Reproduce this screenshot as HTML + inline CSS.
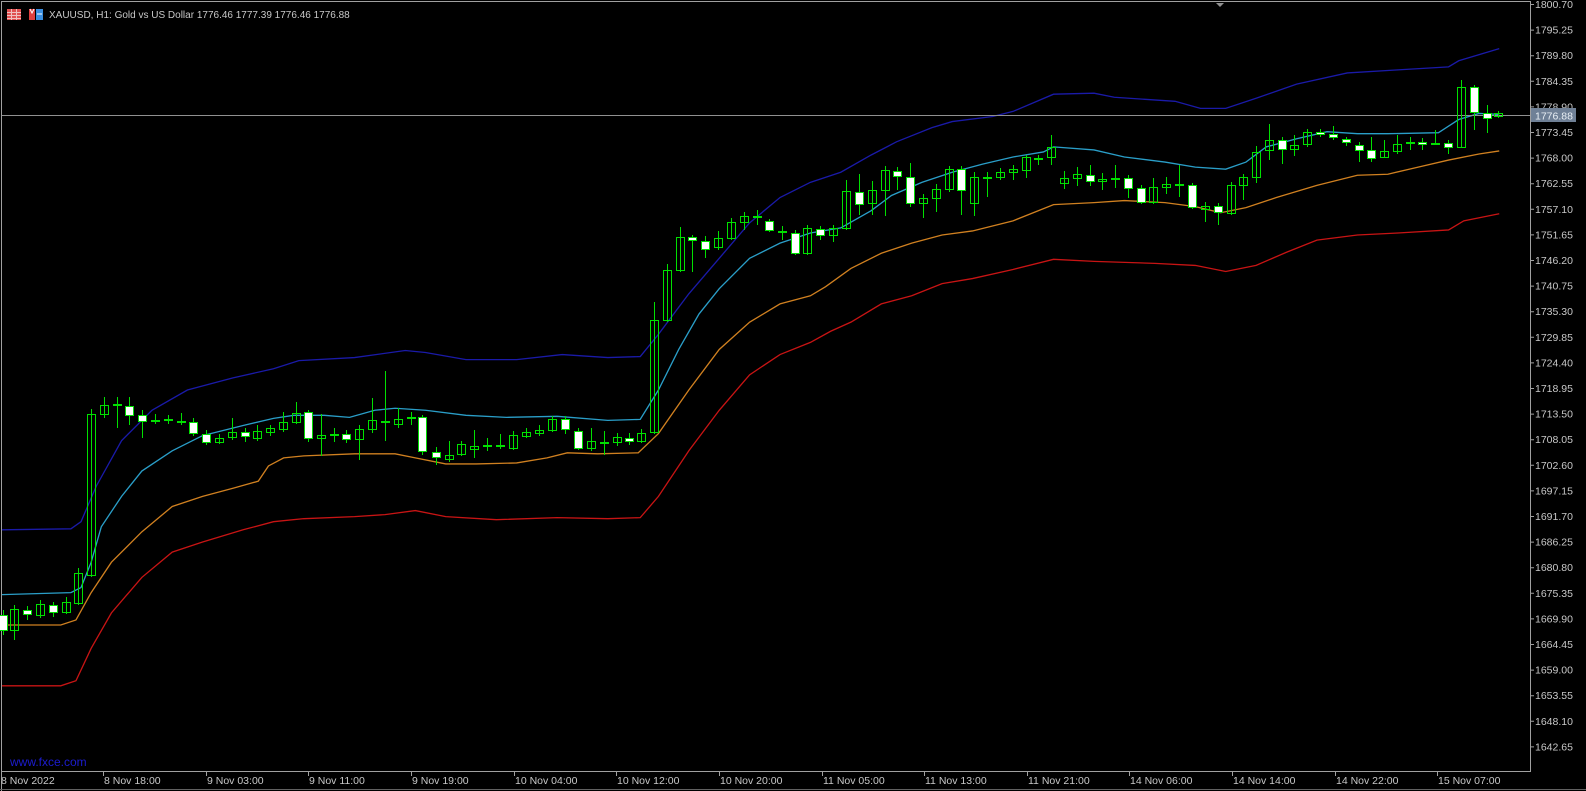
<!DOCTYPE html>
<html><head><meta charset="utf-8"><style>
html,body{margin:0;padding:0;background:#000;width:1586px;height:791px;overflow:hidden}
svg{display:block}
text{font-family:"Liberation Sans",sans-serif;font-size:10.5px;fill:#c8c8c8}
.g{fill:none;stroke:#00e000;stroke-width:1}
.w{fill:#fff;stroke:#00e000;stroke-width:1}
</style></head><body>
<svg width="1586" height="791" viewBox="0 0 1586 791" xmlns="http://www.w3.org/2000/svg">
<rect width="1586" height="791" fill="#000"/>
<path d="M1.5 791V1.5H1530.5V771.5H1.5" fill="none" stroke="#a0a0a0"/>
<path d="M0 789.5H1586" stroke="#606060"/>
<path d="M1216 3h8l-4 4z" fill="#909090"/>
<g transform="scale(1.013)" fill="none" stroke-width="1.3">
<polyline stroke="#1a1aa8" points="2,523 70,522 80,515 95,480 120,435 150,405 185,385 230,373 270,364 295,356 350,353 400,346 420,348 460,355 510,355 555,350 600,353 632,352 650,330 680,290 710,255 740,220 770,195 800,180 830,170 860,153 885,140 920,126 940,120 980,115 1000,110 1040,93 1080,92 1100,96 1160,100 1185,107 1210,107 1240,97 1280,83 1330,72 1380,69 1430,66 1440,60 1480,48"/>
<polyline stroke="#2a9ec8" points="2,587 70,585 80,580 90,555 100,520 120,490 140,465 170,445 200,430 240,420 270,413 290,410 320,410 345,412 370,405 390,403 420,405 460,410 500,412 550,411 600,415 632,414 650,385 670,345 690,310 710,285 740,255 770,240 800,230 830,225 860,208 880,193 910,180 940,170 970,162 1000,155 1030,150 1040,145 1080,148 1110,155 1150,160 1180,165 1210,167 1230,160 1250,145 1280,137 1310,130 1340,132 1370,132 1420,131 1440,118 1460,112 1480,113"/>
<polyline stroke="#d08020" points="2,617 60,617 75,612 90,585 110,555 140,525 170,500 200,490 230,482 255,475 265,460 280,452 300,450 350,448 390,448 410,452 440,458 470,458 510,457 540,452 560,447 590,448 630,447 650,428 680,385 710,345 740,318 770,300 800,292 815,283 840,265 870,250 900,240 930,232 960,228 1000,218 1040,202 1080,200 1110,198 1150,200 1180,204 1205,210 1230,205 1260,195 1300,183 1340,173 1370,172 1400,165 1430,158 1460,152 1480,149"/>
<polyline stroke="#c81414" points="2,677 60,677 75,672 90,640 110,605 140,570 170,545 200,535 240,523 270,515 300,512 350,510 380,508 410,504 440,510 490,513 550,511 600,512 632,511 650,490 680,445 710,405 740,370 770,350 800,338 820,327 840,318 870,300 900,292 930,280 960,275 1000,266 1040,256 1080,258 1140,260 1180,262 1210,268 1240,262 1270,249 1300,237 1340,232 1380,230 1430,227 1445,218 1480,211"/>
</g>
<path d="M2 115.5H1530" stroke="#909090"/>
<path stroke="#00e000" stroke-width="1" fill="none" d="M3.5 610V635M14.5 605V640M27.5 606V620M40.5 600V618M53.5 602V617M66.5 597V614M78.5 568V605M91.5 409V577M104.5 397V418M117.5 397V428M129.5 397V425M142.5 410V438M155.5 414V424M168.5 415V424M181.5 413V425M193.5 418V436M206.5 430V445M219.5 434V444M232.5 418V440M245.5 428V442M257.5 425V441M270.5 425V436M283.5 412V432M296.5 402V424M308.5 410V442M321.5 414V456M334.5 428V442M346.5 430V443M359.5 425V460M372.5 398V433M385.5 371V441M398.5 408V428M411.5 412V425M422.5 415V455M436.5 447V465M449.5 441V462M461.5 441V456M474.5 430V458M487.5 438V451M500.5 434V449M513.5 431V450M526.5 428V438M539.5 425V436M552.5 416V432M565.5 416V434M578.5 428V450M591.5 428V451M604.5 431V455M617.5 433V446M629.5 433V445M641.5 429V443M654.5 302V434M667.5 264V322M680.5 227V272M692.5 235V272M705.5 236V258M718.5 231V250M731.5 218V240M744.5 212V230M757.5 210V225M769.5 219V232M782.5 226V240M795.5 230V255M807.5 225V255M820.5 226V240M833.5 225V242M846.5 180V230M859.5 174V215M872.5 181V215M885.5 166V216M897.5 167V190M910.5 163V207M923.5 194V218M936.5 184V212M949.5 166V192M961.5 166V215M974.5 172V216M987.5 172V197M1000.5 168V180M1013.5 165V180M1026.5 155V178M1038.5 155V165M1051.5 135V165M1064.5 171V189M1077.5 167V186M1090.5 165V186M1102.5 173V190M1115.5 165V188M1128.5 175V198M1141.5 185V204M1153.5 178V204M1166.5 177V194M1179.5 165V197M1192.5 183V209M1205.5 202V222M1218.5 203V225M1231.5 182V215M1243.5 174V200M1256.5 146V183M1269.5 124V160M1282.5 137V164M1294.5 135V156M1307.5 129V147M1320.5 129V137M1333.5 126V140M1346.5 137V146M1359.5 142V162M1371.5 137V162M1384.5 140V157M1397.5 135V154M1410.5 137V150M1422.5 138V150M1435.5 130V145M1448.5 140V154M1461.5 80V148M1474.5 85V130M1487.5 105V133M1498.5 111V118"/>
<g>
<rect class="w" x="-0.5" y="615.5" width="8" height="15"/>
<rect class="g" x="10.5" y="609.5" width="8" height="21"/>
<rect class="w" x="23.5" y="610.5" width="8" height="4"/>
<rect class="g" x="36.5" y="604.5" width="8" height="11"/>
<rect class="w" x="49.5" y="605.5" width="8" height="7"/>
<rect class="g" x="62.5" y="602.5" width="8" height="10"/>
<rect class="g" x="74.5" y="573.5" width="8" height="30"/>
<rect class="g" x="87.5" y="414.5" width="8" height="161"/>
<rect class="g" x="100.5" y="405.5" width="8" height="9"/>
<rect class="g" x="113.5" y="404.5" width="8" height="1"/>
<rect class="w" x="125.5" y="406.5" width="8" height="9"/>
<rect class="w" x="138.5" y="415.5" width="8" height="6"/>
<rect class="g" x="151.5" y="420.5" width="8" height="1"/>
<rect class="g" x="164.5" y="419.5" width="8" height="1"/>
<rect class="g" x="177.5" y="421.5" width="8" height="1"/>
<rect class="w" x="189.5" y="422.5" width="8" height="11"/>
<rect class="w" x="202.5" y="434.5" width="8" height="8"/>
<rect class="g" x="215.5" y="438.5" width="8" height="4"/>
<rect class="g" x="228.5" y="432.5" width="8" height="5"/>
<rect class="w" x="241.5" y="432.5" width="8" height="4"/>
<rect class="g" x="253.5" y="431.5" width="8" height="7"/>
<rect class="g" x="266.5" y="428.5" width="8" height="4"/>
<rect class="g" x="279.5" y="422.5" width="8" height="7"/>
<rect class="g" x="292.5" y="413.5" width="8" height="9"/>
<rect class="w" x="304.5" y="412.5" width="8" height="26"/>
<rect class="g" x="317.5" y="435.5" width="8" height="3"/>
<rect class="g" x="330.5" y="434.5" width="8" height="1"/>
<rect class="w" x="342.5" y="434.5" width="8" height="5"/>
<rect class="g" x="355.5" y="429.5" width="8" height="10"/>
<rect class="g" x="368.5" y="420.5" width="8" height="9"/>
<rect class="g" x="381.5" y="421.5" width="8" height="1"/>
<rect class="g" x="394.5" y="419.5" width="8" height="5"/>
<rect class="g" x="407.5" y="417.5" width="8" height="1"/>
<rect class="w" x="418.5" y="417.5" width="8" height="34"/>
<rect class="w" x="432.5" y="452.5" width="8" height="5"/>
<rect class="g" x="445.5" y="455.5" width="8" height="4"/>
<rect class="g" x="457.5" y="444.5" width="8" height="10"/>
<rect class="g" x="470.5" y="446.5" width="8" height="3"/>
<rect class="g" x="483.5" y="445.5" width="8" height="1"/>
<rect class="g" x="496.5" y="445.5" width="8" height="1"/>
<rect class="g" x="509.5" y="435.5" width="8" height="13"/>
<rect class="g" x="522.5" y="432.5" width="8" height="4"/>
<rect class="g" x="535.5" y="430.5" width="8" height="3"/>
<rect class="g" x="548.5" y="419.5" width="8" height="11"/>
<rect class="w" x="561.5" y="419.5" width="8" height="10"/>
<rect class="w" x="574.5" y="431.5" width="8" height="17"/>
<rect class="g" x="587.5" y="441.5" width="8" height="7"/>
<rect class="g" x="600.5" y="442.5" width="8" height="1"/>
<rect class="g" x="613.5" y="437.5" width="8" height="5"/>
<rect class="w" x="625.5" y="438.5" width="8" height="3"/>
<rect class="g" x="637.5" y="433.5" width="8" height="8"/>
<rect class="g" x="650.5" y="320.5" width="8" height="112"/>
<rect class="g" x="663.5" y="270.5" width="8" height="50"/>
<rect class="g" x="676.5" y="237.5" width="8" height="33"/>
<rect class="w" x="688.5" y="237.5" width="8" height="3"/>
<rect class="w" x="701.5" y="241.5" width="8" height="8"/>
<rect class="g" x="714.5" y="238.5" width="8" height="9"/>
<rect class="g" x="727.5" y="222.5" width="8" height="16"/>
<rect class="g" x="740.5" y="216.5" width="8" height="6"/>
<rect class="g" x="753.5" y="216.5" width="8" height="1"/>
<rect class="w" x="765.5" y="221.5" width="8" height="9"/>
<rect class="g" x="778.5" y="231.5" width="8" height="1"/>
<rect class="w" x="791.5" y="233.5" width="8" height="20"/>
<rect class="g" x="803.5" y="228.5" width="8" height="25"/>
<rect class="w" x="816.5" y="229.5" width="8" height="6"/>
<rect class="g" x="829.5" y="228.5" width="8" height="7"/>
<rect class="g" x="842.5" y="191.5" width="8" height="37"/>
<rect class="w" x="855.5" y="192.5" width="8" height="12"/>
<rect class="g" x="868.5" y="190.5" width="8" height="13"/>
<rect class="g" x="881.5" y="170.5" width="8" height="20"/>
<rect class="w" x="893.5" y="171.5" width="8" height="5"/>
<rect class="w" x="906.5" y="177.5" width="8" height="26"/>
<rect class="g" x="919.5" y="198.5" width="8" height="5"/>
<rect class="g" x="932.5" y="189.5" width="8" height="9"/>
<rect class="g" x="945.5" y="169.5" width="8" height="20"/>
<rect class="w" x="957.5" y="169.5" width="8" height="21"/>
<rect class="g" x="970.5" y="177.5" width="8" height="26"/>
<rect class="g" x="983.5" y="177.5" width="8" height="1"/>
<rect class="g" x="996.5" y="172.5" width="8" height="5"/>
<rect class="g" x="1009.5" y="169.5" width="8" height="3"/>
<rect class="g" x="1022.5" y="157.5" width="8" height="13"/>
<rect class="g" x="1034.5" y="158.5" width="8" height="1"/>
<rect class="g" x="1047.5" y="147.5" width="8" height="10"/>
<rect class="g" x="1060.5" y="178.5" width="8" height="5"/>
<rect class="g" x="1073.5" y="174.5" width="8" height="4"/>
<rect class="w" x="1086.5" y="175.5" width="8" height="6"/>
<rect class="g" x="1098.5" y="179.5" width="8" height="2"/>
<rect class="g" x="1111.5" y="178.5" width="8" height="1"/>
<rect class="w" x="1124.5" y="178.5" width="8" height="10"/>
<rect class="w" x="1137.5" y="188.5" width="8" height="14"/>
<rect class="g" x="1149.5" y="187.5" width="8" height="15"/>
<rect class="g" x="1162.5" y="184.5" width="8" height="3"/>
<rect class="g" x="1175.5" y="184.5" width="8" height="1"/>
<rect class="w" x="1188.5" y="185.5" width="8" height="22"/>
<rect class="g" x="1201.5" y="206.5" width="8" height="3"/>
<rect class="w" x="1214.5" y="206.5" width="8" height="6"/>
<rect class="g" x="1227.5" y="185.5" width="8" height="28"/>
<rect class="g" x="1239.5" y="177.5" width="8" height="8"/>
<rect class="g" x="1252.5" y="152.5" width="8" height="25"/>
<rect class="g" x="1265.5" y="140.5" width="8" height="10"/>
<rect class="w" x="1278.5" y="140.5" width="8" height="9"/>
<rect class="g" x="1290.5" y="145.5" width="8" height="4"/>
<rect class="g" x="1303.5" y="132.5" width="8" height="12"/>
<rect class="w" x="1316.5" y="132.5" width="8" height="2"/>
<rect class="w" x="1329.5" y="134.5" width="8" height="3"/>
<rect class="w" x="1342.5" y="139.5" width="8" height="3"/>
<rect class="w" x="1355.5" y="145.5" width="8" height="5"/>
<rect class="w" x="1367.5" y="150.5" width="8" height="8"/>
<rect class="g" x="1380.5" y="151.5" width="8" height="6"/>
<rect class="g" x="1393.5" y="144.5" width="8" height="7"/>
<rect class="g" x="1406.5" y="142.5" width="8" height="1"/>
<rect class="w" x="1418.5" y="142.5" width="8" height="2"/>
<rect class="g" x="1431.5" y="143.5" width="8" height="1"/>
<rect class="w" x="1444.5" y="143.5" width="8" height="4"/>
<rect class="g" x="1457.5" y="87.5" width="8" height="60"/>
<rect class="w" x="1470.5" y="87.5" width="8" height="25"/>
<rect class="w" x="1483.5" y="113.5" width="8" height="5"/>
<rect class="g" x="1494.5" y="113.5" width="8" height="3"/>
</g>
<g>
<rect x="7" y="9" width="14" height="11" fill="#e05050"/>
<path d="M7 12.5H21M7 15.5H21M7 18.5H21M11.5 9V20M16.5 9V20" stroke="#f0c0c0"/>
<rect x="29" y="9" width="6" height="11" fill="#e04040"/>
<rect x="36" y="9" width="7" height="11" fill="#3a8ee0"/>
<path d="M30 9l2 4 2-4M37 14h5" stroke="#fff" fill="none"/>
</g>
<text x="49" y="18" style="font-size:10px">XAUUSD, H1:  Gold vs US Dollar  1776.46 1777.39 1776.46 1776.88</text>
<text x="10" y="766" style="font-size:12px;fill:#1c1cd0">www.fxce.com</text>
<g>
<path stroke="#a0a0a0" d="M1530 4.5h4M1530 30.1h4M1530 55.7h4M1530 81.3h4M1530 106.9h4M1530 132.5h4M1530 158.1h4M1530 183.7h4M1530 209.3h4M1530 234.9h4M1530 260.5h4M1530 286.1h4M1530 311.7h4M1530 337.3h4M1530 362.9h4M1530 388.5h4M1530 414.1h4M1530 439.7h4M1530 465.3h4M1530 490.9h4M1530 516.5h4M1530 542.1h4M1530 567.7h4M1530 593.3h4M1530 618.9h4M1530 644.5h4M1530 670.1h4M1530 695.7h4M1530 721.3h4M1530 746.9h4"/>
<g transform="translate(1535 4)">
<text y="4">1800.70</text><text y="29.6">1795.25</text><text y="55.2">1789.80</text><text y="80.8">1784.35</text><text y="106.4">1778.90</text><text y="132">1773.45</text><text y="157.6">1768.00</text><text y="183.2">1762.55</text><text y="208.8">1757.10</text><text y="234.4">1751.65</text><text y="260">1746.20</text><text y="285.6">1740.75</text><text y="311.2">1735.30</text><text y="336.8">1729.85</text><text y="362.4">1724.40</text><text y="388">1718.95</text><text y="413.6">1713.50</text><text y="439.2">1708.05</text><text y="464.8">1702.60</text><text y="490.4">1697.15</text><text y="516">1691.70</text><text y="541.6">1686.25</text><text y="567.2">1680.80</text><text y="592.8">1675.35</text><text y="618.4">1669.90</text><text y="644">1664.45</text><text y="669.6">1659.00</text><text y="695.2">1653.55</text><text y="720.8">1648.10</text><text y="746.4">1642.65</text>
</g>
<rect x="1531" y="108" width="45" height="14" fill="#6f8096"/>
<text x="1535" y="119.5" style="fill:#e8eef4">1776.88</text>
</g>
<path stroke="#a0a0a0" d="M103.5 771v5M206.5 771v5M308.5 771v5M411.5 771v5M514.5 771v5M616.5 771v5M719.5 771v5M822.5 771v5M924.5 771v5M1027.5 771v5M1129.5 771v5M1232.5 771v5M1335.5 771v5M1437.5 771v5"/>
<g>
<text x="1" y="784">8 Nov 2022</text>
<text x="104" y="784">8 Nov 18:00</text>
<text x="207" y="784">9 Nov 03:00</text>
<text x="309" y="784">9 Nov 11:00</text>
<text x="412" y="784">9 Nov 19:00</text>
<text x="515" y="784">10 Nov 04:00</text>
<text x="617" y="784">10 Nov 12:00</text>
<text x="720" y="784">10 Nov 20:00</text>
<text x="823" y="784">11 Nov 05:00</text>
<text x="925" y="784">11 Nov 13:00</text>
<text x="1028" y="784">11 Nov 21:00</text>
<text x="1130" y="784">14 Nov 06:00</text>
<text x="1233" y="784">14 Nov 14:00</text>
<text x="1336" y="784">14 Nov 22:00</text>
<text x="1438" y="784">15 Nov 07:00</text>
</g>
</svg>
</body></html>
